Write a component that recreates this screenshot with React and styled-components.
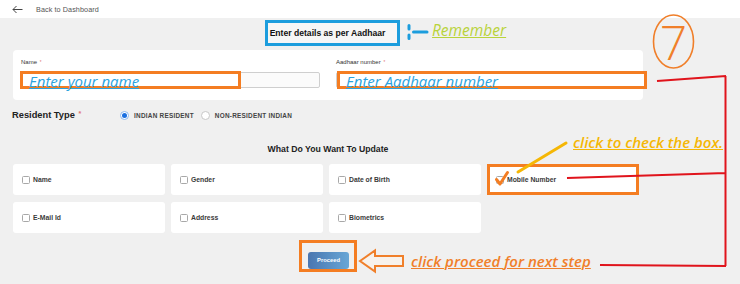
import React from "react";
import styled, { createGlobalStyle } from "styled-components";

const Global = createGlobalStyle`
  html, body { margin: 0; padding: 0; }
  body {
    background: #f0f0f0;
    font-family: "Liberation Sans", Arial, sans-serif;
    color: #222;
    width: 740px;
    height: 284px;
    overflow: hidden;
  }
`;

const Page = styled.div`
  position: relative;
  width: 740px;
  height: 284px;
  background: #f0f0f0;
`;

const TopBar = styled.header`
  height: 18px;
  background: #fff;
  display: flex;
  align-items: center;
  padding-left: 12px;
  gap: 13px;
  box-sizing: border-box;
`;

const BackText = styled.span`
  font-size: 7.2px;
  color: #555;
  letter-spacing: 0.1px;
`;

const Main = styled.main`
  width: 630px;
  margin-left: 13px;
  display: flex;
  flex-direction: column;
`;

const HeadingRow = styled.div`
  display: flex;
  justify-content: center;
  margin-top: 2px;
`;

const HeadingBox = styled.h2`
  margin: 0 0 0 9px;
  height: 26px;
  box-sizing: border-box;
  border: 3px solid #1c9ddd;
  background: #f6f6f6;
  display: flex;
  align-items: center;
  padding: 0 12px 0 2px;
  font-size: 8.6px;
  font-weight: 700;
  color: #111;
`;

const FormCard = styled.section`
  margin-top: 4px;
  background: #fff;
  border-radius: 4px;
  padding: 9px 8px 12px;
  display: grid;
  grid-template-columns: 1fr 1fr;
  column-gap: 16px;
`;

const Field = styled.div`
  display: flex;
  flex-direction: column;
  gap: 6px;
`;

const Label = styled.label`
  font-size: 6px;
  color: #333;
  line-height: 7px;
`;

const Req = styled.span`
  color: #e07070;
  font-size: 0.75em;
  vertical-align: top;
  margin-left: 1px;
`;

const InputWrap = styled.div`
  position: relative;
  height: 16px;
`;

const Input = styled.div`
  height: 16px;
  box-sizing: border-box;
  border: 1px solid #cfcfcf;
  border-radius: 2px;
  background: #fbfbfb;
`;

const Highlight = styled.div`
  position: absolute;
  top: -1px;
  left: ${(p) => p.$left}px;
  width: ${(p) => p.$width}px;
  height: 18px;
  box-sizing: border-box;
  border: 3px solid #f47d22;
  background: #fff;
  display: flex;
  align-items: center;
  padding-left: 6px;
`;

const Hint = styled.span`
  font-family: "Open Sans", sans-serif;
  font-style: italic;
  font-size: 15px;
  line-height: 14px;
  color: #2aa2de;
  text-decoration: underline;
  text-decoration-thickness: 1px;
  text-underline-offset: 1px;
  white-space: nowrap;
  margin-top: 1px;
`;

const ResidentRow = styled.div`
  margin-top: 8px;
  margin-left: -1px;
  height: 14px;
  display: flex;
  align-items: center;
`;

const ResidentLabel = styled.span`
  font-size: 9.3px;
  font-weight: 700;
  color: #222;
  width: 108px;
`;

const RadioOption = styled.label`
  display: flex;
  align-items: center;
  gap: 5px;
  font-size: 6.4px;
  font-weight: 700;
  color: #444;
  letter-spacing: 0.25px;
  margin-right: 7px;
`;

const Radio = styled.span`
  width: 9px;
  height: 9px;
  box-sizing: border-box;
  border-radius: 50%;
  border: 1px solid ${(p) => (p.$checked ? "#8bb8ef" : "#c8c8c8")};
  background: #fff;
  display: flex;
  align-items: center;
  justify-content: center;
  &::after {
    content: "";
    width: 5px;
    height: 5px;
    border-radius: 50%;
    background: ${(p) => (p.$checked ? "#1a6fe0" : "transparent")};
  }
`;

const SectionTitle = styled.h3`
  margin: 21px 0 0;
  text-align: center;
  font-size: 8.7px;
  line-height: 12px;
  font-weight: 700;
  color: #222;
`;

const OptionsGrid = styled.div`
  margin-top: 9px;
  display: grid;
  grid-template-columns: repeat(4, 152px);
  grid-auto-rows: 31px;
  gap: 7px 6px;
`;

const OptionCard = styled.div`
  position: relative;
  background: #fff;
  box-sizing: border-box;
  border: ${(p) => (p.$marked ? "3px solid #f47d22" : "none")};
  border-radius: ${(p) => (p.$marked ? "0" : "3px")};
  display: flex;
  align-items: center;
  gap: 3px;
  padding-left: ${(p) => (p.$marked ? "6px" : "9px")};
`;

const Checkbox = styled.span`
  width: 8px;
  height: 8px;
  box-sizing: border-box;
  border: 1px solid #a8a8a8;
  border-radius: 1.5px;
  background: #fff;
  position: relative;
`;

const CheckMark = styled.svg`
  position: absolute;
  left: -2px;
  top: -6px;
  overflow: visible;
`;

const OptionText = styled.span`
  font-size: 6.8px;
  font-weight: 700;
  color: #3a3a3a;
`;

const ActionRow = styled.div`
  margin-top: 7px;
  display: flex;
  justify-content: center;
`;

const ProceedFrame = styled.div`
  width: 58px;
  height: 32px;
  box-sizing: border-box;
  border: 3px solid #f47d22;
  padding: 5px 0 0 6px;
`;

const ProceedButton = styled.button`
  width: 41px;
  height: 17px;
  border: none;
  border-radius: 3px;
  background: linear-gradient(90deg, #4a76b0, #68a6d6);
  color: #fff;
  font-family: "Liberation Sans", Arial, sans-serif;
  font-size: 5.8px;
  font-weight: 700;
  padding: 0;
`;

const Overlay = styled.svg`
  position: absolute;
  left: 0;
  top: 0;
  pointer-events: none;
`;

const Note = styled.span`
  position: absolute;
  left: ${(p) => p.$x}px;
  top: ${(p) => p.$y}px;
  font-family: "Open Sans", sans-serif;
  font-style: italic;
  font-weight: ${(p) => p.$weight || 600};
  font-size: ${(p) => p.$size}px;
  line-height: 18px;
  color: ${(p) => p.$color};
  text-decoration: underline;
  text-decoration-thickness: 1px;
  text-underline-offset: 1px;
  white-space: nowrap;
`;

const StepNumber = styled.span`
  position: absolute;
  left: 653px;
  top: 15px;
  width: 41px;
  height: 53px;
  display: flex;
  align-items: center;
  justify-content: center;
  font-family: "Open Sans", sans-serif;
  font-weight: 300;
  font-size: 48px;
  color: #f07f2a;
`;

const options = [
  { label: "Name" },
  { label: "Gender" },
  { label: "Date of Birth" },
  { label: "Mobile Number", marked: true },
  { label: "E-Mail Id" },
  { label: "Address" },
  { label: "Biometrics" },
];

export default function App() {
  return (
    <Page>
      <Global />
      <TopBar>
        <svg width="11" height="9" viewBox="0 0 11 9">
          <path d="M10.5 4.5H1 M4.5 1L1 4.5L4.5 8" fill="none" stroke="#444" strokeWidth="1" />
        </svg>
        <BackText>Back to Dashboard</BackText>
      </TopBar>
      <Main>
        <HeadingRow>
          <HeadingBox>Enter details as per Aadhaar</HeadingBox>
        </HeadingRow>
        <FormCard>
          <Field>
            <Label>
              Name <Req>*</Req>
            </Label>
            <InputWrap>
              <Input />
              <Highlight $left={-1} $width={221}>
                <Hint>Enter your name</Hint>
              </Highlight>
            </InputWrap>
          </Field>
          <Field>
            <Label>
              Aadhaar number <Req>*</Req>
            </Label>
            <InputWrap>
              <Input />
              <Highlight $left={1} $width={310}>
                <Hint>Enter Aadhaar number</Hint>
              </Highlight>
            </InputWrap>
          </Field>
        </FormCard>
        <ResidentRow>
          <ResidentLabel>
            Resident Type <Req>*</Req>
          </ResidentLabel>
          <RadioOption>
            <Radio $checked />
            INDIAN RESIDENT
          </RadioOption>
          <RadioOption>
            <Radio />
            NON-RESIDENT INDIAN
          </RadioOption>
        </ResidentRow>
        <SectionTitle>What Do You Want To Update</SectionTitle>
        <OptionsGrid>
          {options.map((o) => (
            <OptionCard key={o.label} $marked={o.marked}>
              <Checkbox>
                {o.marked && (
                  <CheckMark width="14" height="15" viewBox="0 0 14 15">
                    <path d="M1.5 8.5L5 13L12.5 1.5" fill="none" stroke="#f47d22" strokeWidth="3" strokeLinecap="round" strokeLinejoin="round" />
                  </CheckMark>
                )}
              </Checkbox>
              <OptionText>{o.label}</OptionText>
            </OptionCard>
          ))}
        </OptionsGrid>
        <ActionRow>
          <ProceedFrame>
            <ProceedButton>Proceed</ProceedButton>
          </ProceedFrame>
        </ActionRow>
      </Main>

      <Overlay width="740" height="284" viewBox="0 0 740 284">
        <path d="M409 25.5V29 M409 35V38.5 M413.5 32H427" stroke="#1c9ddd" strokeWidth="3" strokeLinecap="round" fill="none" />
        <ellipse cx="673.5" cy="41.5" rx="20" ry="26.5" fill="none" stroke="#f07f2a" strokeWidth="1.6" />
        <path d="M657 81L726 76 M725.5 76V266 M567 178L726 173 M600 265L726 266" stroke="#e0141c" strokeWidth="2" fill="none" />
        <path d="M518 172L566 143" stroke="#f5b705" strokeWidth="3" strokeLinecap="round" />
        <path d="M360 261L375 250.5V256H403V266H375V271.5Z" fill="#f7f2ec" stroke="#f07f2a" strokeWidth="2" strokeLinejoin="miter" />
      </Overlay>
      <StepNumber>7</StepNumber>
      <Note $x={432} $y={21} $size={15.5} $weight={400} $color="#b9d33a">
        Remember
      </Note>
      <Note $x={573} $y={133} $size={15} $color="#f5b705">
        click to check the box.
      </Note>
      <Note $x={411} $y={252} $size={15} $color="#f07f2a">
        click proceed for next step
      </Note>
    </Page>
  );
}
